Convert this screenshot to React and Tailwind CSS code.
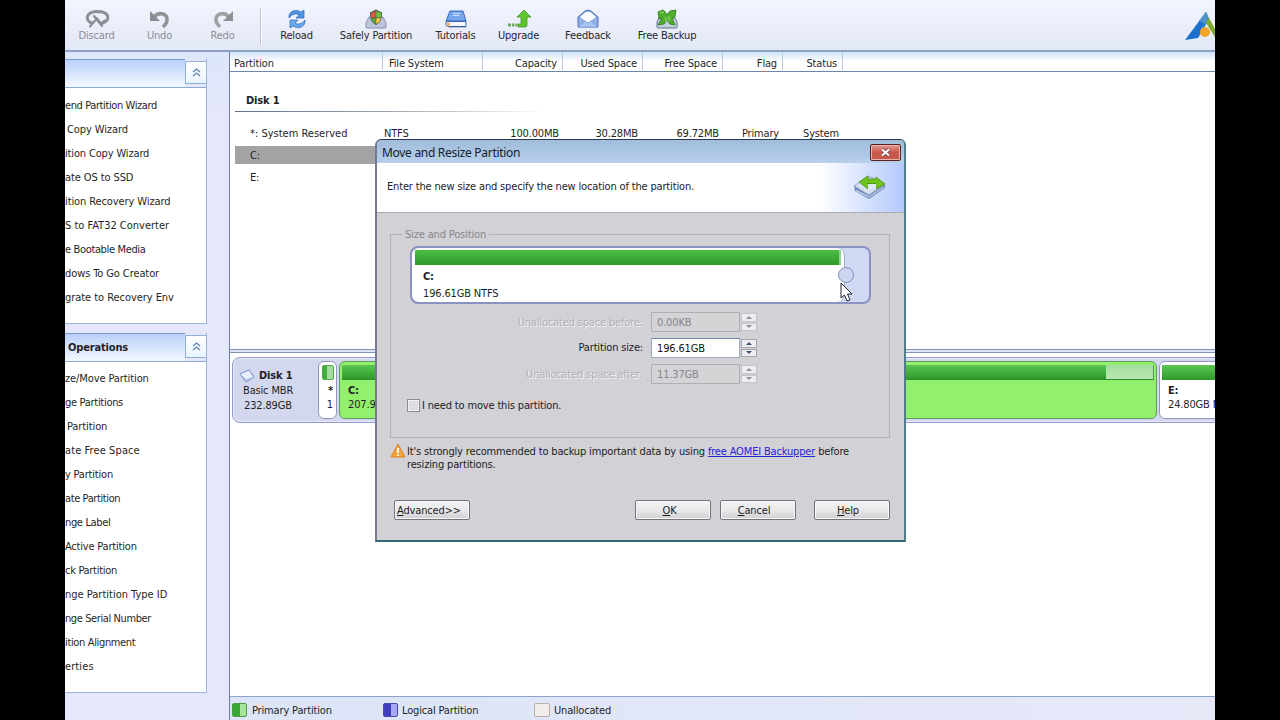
import { clsx } from "clsx";

const tools = [
  { label: "Discard", icon: "discard", width: "w-[63px]", muted: true },
  { label: "Undo", icon: "undo", width: "w-[63px]", muted: true },
  { label: "Redo", icon: "redo", width: "w-[63px]", muted: true },
  { divider: true },
  { label: "Reload", icon: "reload", width: "w-[63px]" },
  { label: "Safely Partition", icon: "shield", width: "w-[96px]" },
  { label: "Tutorials", icon: "book", width: "w-[63px]" },
  { label: "Upgrade", icon: "upgrade", width: "w-[63px]" },
  { label: "Feedback", icon: "mail", width: "w-[76px]" },
  { label: "Free Backup", icon: "backup", width: "w-[82px]" },
];

const wizards = [
  { label: "end Partition Wizard", className: "tracking-[-0.4px]" },
  { label: "Copy Wizard", className: "pl-[2px] tracking-[-0.1px]" },
  { label: "ition Copy Wizard", className: "tracking-[-0.15px]" },
  { label: "ate OS to SSD", className: "tracking-[-0.1px]" },
  { label: "ition Recovery Wizard", className: "tracking-[-0.1px]" },
  { label: "S to FAT32 Converter", className: "tracking-[0px]" },
  { label: "e Bootable Media", className: "tracking-[-0.35px]" },
  { label: "dows To Go Creator", className: "tracking-[-0.1px]" },
  { label: "grate to Recovery Env", className: "tracking-[-0.05px]" },
];

const operations = [
  { label: "ze/Move Partition", className: "tracking-[-0.1px]" },
  { label: "ge Partitions", className: "tracking-[-0.3px]" },
  { label: "Partition", className: "pl-[2px] tracking-[-0.1px]" },
  { label: "ate Free Space", className: "tracking-[0.1px]" },
  { label: "y Partition", className: "tracking-[-0.2px]" },
  { label: "ate Partition", className: "tracking-[-0.4px]" },
  { label: "nge Label", className: "tracking-[-0.35px]" },
  { label: "Active Partition", className: "tracking-[-0.2px]" },
  { label: "ck Partition", className: "tracking-[-0.3px]" },
  { label: "nge Partition Type ID", className: "tracking-[0px]" },
  { label: "nge Serial Number", className: "tracking-[-0.4px]" },
  { label: "ition Alignment", className: "tracking-[-0.35px]" },
  { label: "erties", className: "tracking-[0.1px]" },
];

const columns = [
  { label: "Partition", className: "w-[153px] pl-[4px]" },
  { label: "File System", className: "w-[100px] pl-[6px]" },
  { label: "Capacity", className: "w-[80px] pr-[5px] justify-end" },
  { label: "Used Space", className: "w-[80px] pr-[5px] justify-end" },
  { label: "Free Space", className: "w-[80px] pr-[5px] justify-end" },
  { label: "Flag", className: "w-[60px] pr-[5px] justify-end" },
  { label: "Status", className: "w-[60px] pr-[5px] justify-end" },
];

function ToolIcon({ name }) {
  switch (name) {
    case "discard":
      return (
        <svg width="26" height="20" viewBox="0 0 26 20" fill="none" stroke="#8f8f93" strokeLinecap="round">
          <path d="M8 14C1 12 1 3 13 2.500c13 0 14 9 5 12" strokeWidth="3" />
          <path d="M6 17.500l7-8 4 5 4-3M10 7l8 10" strokeWidth="2.200" />
        </svg>
      );
    case "undo":
      return (
        <svg width="22" height="20" viewBox="0 0 22 20">
          <path d="M5 8c5-6 14-3 13 3 0 3-2 5-4 7" fill="none" stroke="#919296" strokeWidth="3.600" />
          <path d="M1 2v10h10z" fill="#8b8c90" />
        </svg>
      );
    case "redo":
      return (
        <svg width="22" height="20" viewBox="0 0 22 20">
          <path d="M17 8C12 2 3 5 4 11c0 3 2 5 4 7" fill="none" stroke="#a0a1a5" strokeWidth="3.600" />
          <path d="M21 2v10H11z" fill="#8f9094" />
        </svg>
      );
    case "reload":
      return (
        <svg width="20" height="20" viewBox="0 0 20 20">
          <path d="M2 9C1 3 8-1 14 3l3-2v8H9l3-3C9 4 5 5 2 9z" fill="#4f93e0" stroke="#2b68b8" strokeWidth=".7" />
          <path d="M18 11c1 6-6 10-12 6l-3 2v-8h8l-3 3c3 2 7 1 10-3z" fill="#6aaaf0" stroke="#2b68b8" strokeWidth=".7" />
        </svg>
      );
    case "shield":
      return (
        <svg width="22" height="20" viewBox="0 0 22 20">
          <path d="M4 8h14l3 6v4q0 1-1 1H2q-1 0-1-1v-4z" fill="#bcc5dc" stroke="#8590ac" />
          <path d="M11 .5l6 3c0 6-1 10-6 12.500C6 13.500 5 9.500 5 3.500z" fill="#4d5558" />
          <path d="M10.700 2v6.500H6C6 6.500 6 5.500 6 4.200z" fill="#df5b3c" />
          <path d="M11.300 2v6.500H16C16 6.500 16 5.500 16 4.200z" fill="#6dc335" />
          <path d="M10.700 9.200v5.800C8 13.500 7 12 6.300 9.200z" fill="#58a83e" />
          <path d="M11.300 9.200v5.800c2.700-1.500 3.700-3 4.400-5.800z" fill="#f5cf3a" />
        </svg>
      );
    case "book":
      return (
        <svg width="22" height="20" viewBox="0 0 22 20">
          <path d="M5 2h13l3 10H1z" fill="#76a7ee" stroke="#3b67b5" />
          <path d="M8 4.500h7M7.500 6.500h7" stroke="#c7defc" />
          <path d="M1 12.500h20v5H3q-2 0-2-2z" fill="#f4f6fb" stroke="#3b67b5" />
          <path d="M3 17.800h18" stroke="#355794" />
          <path d="M2 13.500h3v4H2z" fill="#e9b47c" />
        </svg>
      );
    case "upgrade":
      return (
        <svg width="26" height="20" viewBox="0 0 26 20">
          <path d="M18 1l7 7h-4v8q0 2-2 2h-7v-3h3V8h-4z" fill="#5fc52d" stroke="#36901b" strokeWidth=".7" />
          <path d="M2 16h3M6 16h2.500M9.500 16h2" stroke="#6fa85f" strokeWidth="3.200" />
        </svg>
      );
    case "mail":
      return (
        <svg width="22" height="20" viewBox="0 0 22 20">
          <path d="M1 8l7-6q3-2 6 0l7 6v10H1z" fill="#8fb0e6" stroke="#5173b5" />
          <path d="M3 8l6-5h4l6 5-8 6z" fill="#fafcff" />
          <path d="M1 18l7-6 3 2 3-2 7 6z" fill="#a9c5f4" stroke="#6f93d2" strokeWidth=".6" />
        </svg>
      );
    case "backup":
      return (
        <svg width="22" height="20" viewBox="0 0 22 20">
          <path d="M3 9h16l2 4v5q0 1-1 1H2q-1 0-1-1v-5z" fill="#c2d0dd" stroke="#5f7487" />
          <path
            d="M2 3l5-2c2 1 3 3 4 5 1-2 2-3 3-4l6-1-1 7-3 1 3 7-5-1-3-4-3 4-6 1 4-7-3 1z"
            fill="#4fae2e"
            stroke="#2b791d"
            strokeWidth=".8"
          />
          <path d="M4 4l4-1M10 8v5M13 7v5" stroke="#9ade6c" />
        </svg>
      );
    default:
      return null;
  }
}

function Toolbar() {
  return (
    <div className="flex h-[52px] shrink-0 border-b-2 border-[#8fa0c4] bg-linear-to-b from-[#f2f5fe] to-[#e3e8f6]">
      {tools.map((tool, i) =>
        tool.divider ? (
          <div key={i} className="flex w-[11px] justify-end pt-[8px] pr-[3px]">
            <div className="h-[37px] w-[2px] border-l border-[#bcc1d0] bg-white" />
          </div>
        ) : (
          <div key={i} className={clsx("flex flex-col items-center pt-[9px]", tool.width)}>
            <ToolIcon name={tool.icon} />
            <span className={clsx("leading-[13px]", tool.muted ? "text-[#8c8c94]" : "text-[#26262c]")}>
              {tool.label}
            </span>
          </div>
        )
      )}
      <svg className="mt-[10px] ml-auto" width="30" height="32" viewBox="0 0 30 32">
        <path d="M21 2L0 30l13-2L24 9z" fill="#1b70cb" />
        <path d="M21 2l3 7-11 19 4-12z" fill="#2581d2" />
        <path d="M21 2l-7 9 7 3 3-5z" fill="#4b93c6" />
        <path d="M24 8l6 11v8l-9-14z" fill="#7fa92c" />
        <circle cx="20" cy="22" r="5" fill="#f3a428" />
      </svg>
    </div>
  );
}

function SidePanel({ title, items, className, listClass }) {
  return (
    <div className={clsx("flex w-[142px] flex-col border-r border-b border-[#9db3d8] bg-white", className)}>
      <div className="flex h-[29px] shrink-0 border-b border-[#8eacd0] bg-linear-to-b from-[#b9cffa] to-[#f3f8ff]">
        <div className="flex h-full flex-1 items-center border-t border-[#7d9cc9] pl-[3px] font-bold">{title}</div>
        <div className="bg-[#e5e7fa]">
          <div className="mt-[2px] flex h-[23px] w-[21px] items-center justify-center border-y border-l border-[#8fb0d8] bg-linear-to-b from-white to-[#eaf4ff]">
            <svg width="9" height="9" viewBox="0 0 9 9" fill="none" stroke="#5f84b2" strokeWidth="1.300">
              <path d="M1 4l3.500-3L8 4M1 8l3.500-3L8 8" />
            </svg>
          </div>
        </div>
      </div>
      <div className={clsx("flex flex-col", listClass)}>
        {items.map((item) => (
          <div key={item.label} className={clsx("h-[24px] leading-[24px] whitespace-nowrap", item.className)}>
            {item.label}
          </div>
        ))}
      </div>
    </div>
  );
}

function Sidebar() {
  return (
    <div className="w-[164px] shrink-0 overflow-hidden bg-[#e5e7fa] bg-linear-to-b from-[#dce6fa] via-[#e5e7fa] via-10% to-[#e5e7fa] pt-[7px]">
      <SidePanel items={wizards} className="h-[265px]" listClass="pt-[6px]" />
      <SidePanel title="Operations" items={operations} className="mt-[9px] h-[360px]" listClass="pt-[5px]" />
    </div>
  );
}

function PartitionList() {
  return (
    <div className="h-[297px] shrink-0">
      <div className="flex h-[20px] border-b border-[#6d87ab] bg-linear-to-b from-[#cfe3f8] via-white via-50% to-white">
        {columns.map((col) => (
          <div key={col.label} className={clsx("mb-px flex items-center border-r border-[#b9cce4] pt-[6px]", col.className)}>
            {col.label}
          </div>
        ))}
      </div>
      <div className="pl-[5px]">
        <div className="flex h-[39px] items-center pt-[18px] pl-[11px] font-bold">Disk 1</div>
        <div className="h-px w-[310px] bg-linear-to-r from-[#5f7183] via-[#9aa7b2] to-white" />
        <div className="mt-[10px] flex h-[22px] items-center pt-[2px] pl-[15px]">
          <span className="w-[134px] tracking-[0px]">*: System Reserved</span>
          <span className="w-[75px]">NTFS</span>
          <span className="w-[100px] text-right">100.00MB</span>
          <span className="w-[79px] text-right">30.28MB</span>
          <span className="w-[81px] text-right">69.72MB</span>
          <span className="w-[60px] text-right">Primary</span>
          <span className="w-[60px] text-right">System</span>
        </div>
        <div className="mt-[2px] flex h-[18px] w-[610px] items-center bg-[#a3a3a3] pt-[2px] pl-[15px]">C:</div>
        <div className="mt-[2px] flex h-[22px] items-center pt-[2px] pl-[15px]">E:</div>
      </div>
    </div>
  );
}

function DiskMap() {
  return (
    <div className="flex-1 border-t border-[#7f92b4] pt-[4px] pl-[2px]">
      <div className="flex h-[66px] w-[1100px] rounded-lg border border-[#8f9bc6] bg-[#d3d8ef] pt-[3px] shadow-[inset_0_0_0_1px_#e6eafa]">
        <div className="w-[85px] pt-[7px] pl-[6px]">
          <div className="flex h-[15px] items-center font-bold">
            <svg className="mr-[4px]" width="16" height="14" viewBox="0 0 16 14">
              <path d="M1 5l9-4 5 7-8 5z" fill="#e9effc" stroke="#6f8cc0" />
              <path d="M1 5l6 6 8-3M7 11v2" fill="none" stroke="#a0b4da" />
            </svg>
            Disk 1
          </div>
          <div className="pl-[4px] leading-[15px]">Basic MBR</div>
          <div className="pl-[5px] leading-[15px]">232.89GB</div>
        </div>
        <div className="flex h-[58px] w-[19px] flex-col items-end rounded-md border border-[#9298c0] bg-white px-[2px] pt-[3px]">
          <div className="flex h-[15px] w-[12px] rounded-xs border border-[#4daa48] bg-[#a2dc9f]">
            <div className="w-[4px] bg-[#42ad3d]" />
          </div>
          <span className="pt-[3px] pr-px leading-[15px] font-bold">*</span>
          <span className="pr-px leading-[14px]">1</span>
        </div>
        <div className="ml-[2px] h-[58px] w-[818px] rounded-md border border-[#5d9b60] bg-[#93f06c] px-[2px] pt-[3px]">
          <div className="flex h-[15px] border-b border-[#2f8a2c] bg-linear-to-b from-[#5cc653] to-[#2d9a29]">
            <div className="ml-auto h-[14px] w-[48px] border-r border-[#519c4d] bg-linear-to-b from-[#a3dd9f] to-[#b7e8b0]" />
          </div>
          <div className="pt-[4px] pl-[6px] leading-[14px] font-bold">C:</div>
          <div className="pl-[6px] leading-[14px]">207.98GB NTFS</div>
        </div>
        <div className="ml-[2px] h-[58px] w-[160px] rounded-md border border-[#9298c0] bg-white px-[2px] pt-[3px]">
          <div className="h-[15px] bg-linear-to-b from-[#5cc653] to-[#2d9a29]" />
          <div className="pt-[4px] pl-[6px] leading-[14px] font-bold">E:</div>
          <div className="pl-[6px] leading-[14px] whitespace-nowrap">24.80GB NTFS</div>
        </div>
      </div>
    </div>
  );
}

function Legend() {
  return (
    <div className="flex h-[24px] shrink-0 items-center border-t border-[#8ea4c6] bg-linear-to-r from-[#dce5f8] to-[#e6e8f8] pt-[3px] pl-[2px]">
      <div className="flex w-[151px] items-center gap-[5px]">
        <div className="flex h-[14px] w-[15px] rounded-xs border border-[#4d9d47] bg-[#a5e49b]">
          <div className="w-[7px] bg-[#3aa836]" />
        </div>
        <span className="pt-px">Primary Partition</span>
      </div>
      <div className="flex w-[151px] items-center gap-[4px]">
        <div className="flex h-[14px] w-[15px] rounded-xs border border-[#4a4aa8] bg-[#a8a9f4]">
          <div className="w-[7px] bg-[#3f40bd]" />
        </div>
        <span className="pt-px">Logical Partition</span>
      </div>
      <div className="flex items-center gap-[4px]">
        <div className="h-[14px] w-[16px] rounded-xs border border-[#b9aea6] bg-[#f3eeec]" />
        <span className="pt-px">Unallocated</span>
      </div>
    </div>
  );
}

function SpinField({ label, value, disabled }) {
  const arrow = disabled ? "#8f8f95" : "#40507a";
  return (
    <div className="flex h-[20px] items-center">
      <span
        className={clsx(
          "w-[252px] text-right",
          disabled ? "pt-px text-[#b0b0b5] [text-shadow:1px_1px_0_#f4f4f6]" : "pb-px text-[#1c1c1f]"
        )}
      >
        {label}
      </span>
      <div
        className={clsx(
          "ml-[8px] flex h-[20px] w-[89px] items-center border pt-[2px] pl-[5px]",
          disabled ? "border-[#aeb0b4] bg-[#d4d4d7] text-[#85858a]" : "border-[#9daabd] border-t-[#6c84a8] bg-white text-[#111]"
        )}
      >
        {value}
      </div>
      <div className="ml-px flex h-[18px] w-[16px] flex-col gap-px">
        {["M3 0L6 3H0z", "M0 0h6L3 3z"].map((d) => (
          <div
            key={d}
            className={clsx(
              "flex flex-1 items-center justify-center border bg-[#eeeef0]",
              disabled ? "border-[#c3c3c7]" : "border-[#a5a5ad]"
            )}
          >
            <svg width="6" height="3" viewBox="0 0 6 3">
              <path d={d} fill={arrow} />
            </svg>
          </div>
        ))}
      </div>
    </div>
  );
}

function DialogButton({ hotkey, rest, className }) {
  return (
    <button
      className={clsx(
        "h-[20px] w-[76px] rounded-xs border border-[#737378] bg-linear-to-b from-[#f3f3f4] via-[#e9e9eb] to-[#cfcfd2] pt-px text-[#1c1c1f] shadow-[inset_0_0_0_1px_#f6f6f8]",
        className
      )}
    >
      <u>{hotkey}</u>
      {rest}
    </button>
  );
}

function ResizeDialog() {
  return (
    <div className="absolute top-[139px] left-[375px] flex h-[403px] w-[531px] flex-col overflow-hidden rounded-t-md border-2 border-t-[1.5px] border-t-[#2b3a4a] border-r-[#4f7d8c] border-b-[#2f6a73] border-l-[#707a93] bg-[#d2d1d6]">
      <div className="flex h-[23px] shrink-0 items-start justify-between bg-linear-to-b from-[#9fbcda] to-[#b8d0ea] pt-[4px] pr-[3px] pl-[5px]">
        <span className="pt-[2px] font-['Noto_Sans','Open_Sans',sans-serif] text-[12px] leading-[14px] tracking-[-0.3px] text-[#14202f] [font-stretch:normal]">
          Move and Resize Partition
        </span>
        <div className="flex h-[17px] w-[31px] items-center justify-center rounded-xs border border-[#5c2024] bg-linear-to-b from-[#dd9a90] via-[#c9584a] to-[#c45a4c] shadow-[inset_0_0_0_1px_#e9b3aa]">
          <svg width="11" height="9" viewBox="0 0 11 9">
            <path d="M2 1.500l7 6M9 1.500l-7 6" stroke="#6a3a3c" strokeWidth="3.600" />
            <path d="M2 1.500l7 6M9 1.500l-7 6" stroke="#fff" strokeWidth="2.200" />
          </svg>
        </div>
      </div>
      <div className="flex h-[50px] shrink-0 items-center justify-between border-b border-[#a9aab2] bg-white pl-[10px] text-[#1c1c1f]">
        <span className="pb-px">Enter the new size and specify the new location of the partition.</span>
        <div className="flex h-full w-[84px] items-center bg-linear-to-r from-white to-[#b4c8fb] pl-[33px]">
          <svg className="mb-[2px]" width="34" height="26" viewBox="0 0 34 26">
            <path d="M1 12L15 2l17 8v4L16 25 2 17z" fill="#7489b8" />
            <path d="M1 12L15 2l17 8-16 11z" fill="#d5e0f5" stroke="#8da0c8" />
            <path d="M3 16.500l13 6.500 15-10" fill="none" stroke="#b9c9ea" strokeWidth="1.500" />
            <path d="M6 8l9-6v3h8V3l9 7-9 5v-3h-8v3z" fill="#6ec41c" stroke="#4b941b" strokeWidth=".8" />
            <path d="M15 10h8v5h-8z" fill="#dfe8f6" />
            <path d="M14 9.500h9" stroke="#4b941b" />
          </svg>
        </div>
      </div>

      <div className="flex flex-1 flex-col px-[13px] pt-[14px]">
        <fieldset className="h-[211px] w-[500px] border border-[#b2b2b7]">
          <legend className="ml-[11px] px-[3px] leading-[15px] text-[#85858a]">Size and Position</legend>
          <div className="relative mt-[4px] ml-[19px] h-[58px] w-[461px] rounded-lg border-2 border-[#8a92c2] bg-[#d0d8f3]">
            <div className="h-full w-[433px] rounded-lg border-r border-[#a5abc9] bg-white px-[3px] pt-[2px]">
              <div className="h-[15px] border-r-2 border-[#8fd48a] bg-linear-to-b from-[#4dbd46] to-[#2d9a29]" />
              <div className="pt-[4px] pl-[8px] leading-[15px] font-bold">C:</div>
              <div className="pt-[2px] pl-[8px] leading-[15px]">196.61GB NTFS</div>
            </div>
            {/* drag handle with the mouse pointer under it */}
            <div className="absolute top-[19px] left-[426px] size-[16px] rounded-full border border-[#858db8] bg-[#cdd6f0]" />
            <svg className="absolute top-[34px] left-[428px]" width="14" height="20" viewBox="0 0 14 20">
              <path d="M1 1v15l3.500-3 2.500 6 3-1.200L7.500 12H12z" fill="#fff" stroke="#23232e" />
            </svg>
          </div>
          <div className="mt-[8px] flex flex-col gap-[6px]">
            <SpinField label="Unallocated space before:" value="0.00KB" disabled />
            <SpinField label="Partition size:" value="196.61GB" />
            <SpinField label="Unallocated space after:" value="11.37GB" disabled />
          </div>
          <div className="mt-[14px] ml-[16px] flex items-center gap-[2px] text-[#1c1c1f]">
            <div className="size-[13px] border border-[#8b8c90] bg-[#dddde1] shadow-[inset_0_0_0_1px_#f2f2f4]" />
            <span className="pt-px">I need to move this partition.</span>
          </div>
        </fieldset>
        <div className="mt-[5px] flex text-[#1c1c1f]">
          <svg className="mr-[1px]" width="16" height="15" viewBox="0 0 16 15">
            <path d="M8 1l7 13H1z" fill="#f6a43a" stroke="#db8326" strokeLinejoin="round" />
            <path d="M8 5v5M8 11.500v1.500" stroke="#fff" strokeWidth="1.800" />
          </svg>
          <div className="pt-[2px] leading-[13px] whitespace-nowrap">
            It's strongly recommended to backup important data by using{" "}
            <a className="text-[#2722d8] underline">free AOMEI Backupper</a> before
            <br />
            resizing partitions.
          </div>
        </div>
        <div className="mt-[29px] ml-[4px] flex">
          <DialogButton hotkey="A" rest="dvanced>>" className="pr-[6px]" />
          <DialogButton hotkey="O" rest="K" className="ml-[165px] pr-[7px]" />
          <DialogButton hotkey="C" rest="ancel" className="ml-[9px] pr-[8px]" />
          <DialogButton hotkey="H" rest="elp" className="ml-[18px] pr-[8px]" />
        </div>
      </div>
    </div>
  );
}

export default function App() {
  return (
    <div className="relative h-[720px] w-[1280px] overflow-hidden bg-black px-[65px] font-['DejaVu_Sans_Condensed','DejaVu_Sans',sans-serif] text-[11px] leading-[14px] tracking-[-0.16px] text-[#1f1f24] [font-stretch:condensed]">
      <div className="flex h-full flex-col overflow-hidden bg-white">
        <Toolbar />
        <div className="flex min-h-0 flex-1">
          <Sidebar />
          <div className="flex min-w-0 flex-1 flex-col overflow-hidden border-l border-[#6f7f9f]">
            <PartitionList />
            <div className="h-[3px] shrink-0 border-t border-[#7f92b4] bg-[#dfe5f5]" />
            <DiskMap />
            <Legend />
          </div>
        </div>
      </div>
      <ResizeDialog />
    </div>
  );
}
